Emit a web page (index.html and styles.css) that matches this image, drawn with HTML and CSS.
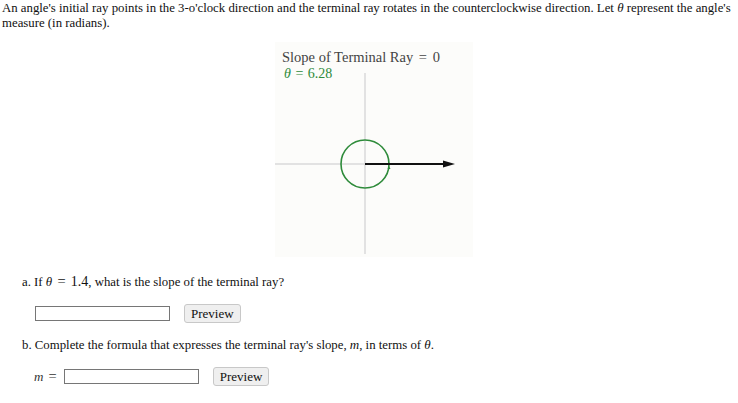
FILE: index.html
```html
<!DOCTYPE html>
<html lang="en">
<head>
    <meta charset="UTF-8">
    <title>Terminal Ray Slope</title>
    <link rel="stylesheet" href="styles.css">
</head>
<body>
    <p class="intro">An angle's initial ray points in the 3-o'clock direction and the terminal ray rotates in the counterclockwise direction. Let <i class="mv">θ</i> represent the angle's measure (in radians).</p>

    <div class="graph">
        <svg width="198" height="215" viewBox="0 0 198 215">
            <rect x="0" y="0" width="198" height="215" fill="#fcfcfa"/>
            <line x1="90" y1="31" x2="90" y2="212" stroke="#dadada" stroke-width="1.5"/>
            <line x1="0" y1="122" x2="90" y2="122" stroke="#dadada" stroke-width="1.5"/>
            <circle cx="90" cy="122" r="24" fill="none" stroke="#2e8b3a" stroke-width="1.6"/>
            <path d="M112.5 127 L114 124 L115.5 127 Z" fill="#2e8b3a"/>
            <line x1="90" y1="122" x2="170" y2="122" stroke="#111" stroke-width="2"/>
            <path d="M168 118.5 L180 122 L168 125.5 Z" fill="#111"/>
            <text x="7" y="20" class="g-title">Slope of Terminal Ray <tspan dx="2">=</tspan> <tspan dx="2">0</tspan></text>
            <text x="9" y="36" class="g-theta"><tspan font-style="italic">θ</tspan> <tspan dx="1">=</tspan> <tspan dx="1">6.28</tspan></text>
        </svg>
    </div>

    <p class="question">a. If <i class="mv">θ</i> <span class="eq">=</span> <span class="num">1.4</span>, what is the slope of the terminal ray?</p>
    <div class="answer answer-a">
        <input type="text" class="field">
        <button class="preview">Preview</button>
    </div>

    <p class="question question-b">b. Complete the formula that expresses the terminal ray's slope, <i class="mv">m</i>, in terms of <i class="mv">θ</i>.</p>
    <div class="answer answer-b">
        <span class="lhs"><i class="mv">m</i> <span class="eq">=</span></span>
        <input type="text" class="field">
        <button class="preview">Preview</button>
    </div>
</body>
</html>
```

FILE: styles.css
```css
body {
    margin: 0;
    padding: 1px 0 1px 2px;
    background: #fff;
    color: #111;
    font-family: "Liberation Serif", "Times New Roman", serif;
    font-size: 12.8px;
    line-height: 15px;
}
.intro {
    margin: 0;
}
.mv {
    font-family: "Liberation Serif", serif;
    font-style: italic;
    font-size: 13px;
    line-height: 1;
}
.eq {
    font-size: 14.5px;
    padding: 0 2px;
    line-height: 1;
}
.num {
    font-size: 14px;
    line-height: 1;
}
.graph {
    margin: 11px 0 0 273px;
    height: 215px;
}
.graph svg {
    display: block;
}
.g-title {
    font-family: "Liberation Serif", serif;
    font-size: 14.5px;
    fill: #444;
}
.g-theta {
    font-family: "Liberation Serif", serif;
    font-size: 14px;
    fill: #2e8b3a;
}
.question {
    margin: 17px 0 0 20px;
}
.question-b {
    margin-top: 15px;
}
.answer {
    display: flex;
    align-items: center;
}
.answer-a {
    padding-left: 33px;
    margin-top: 14px;
}
.answer-b {
    padding-left: 32px;
    margin-top: 14px;
}
.lhs {
    margin-right: 5px;
    color: #333;
}
.field {
    width: 131px;
    height: 11px;
    padding: 1px;
    border: 1px solid #767676;
    margin: 0 14px 0 0;
}
.preview {
    font-family: "Liberation Serif", serif;
    font-size: 13px;
    height: 19px;
    padding: 0 6px;
    background: #efefef;
    color: #111;
    border: 1px solid #c8c8c8;
    border-radius: 3px;
}
```
